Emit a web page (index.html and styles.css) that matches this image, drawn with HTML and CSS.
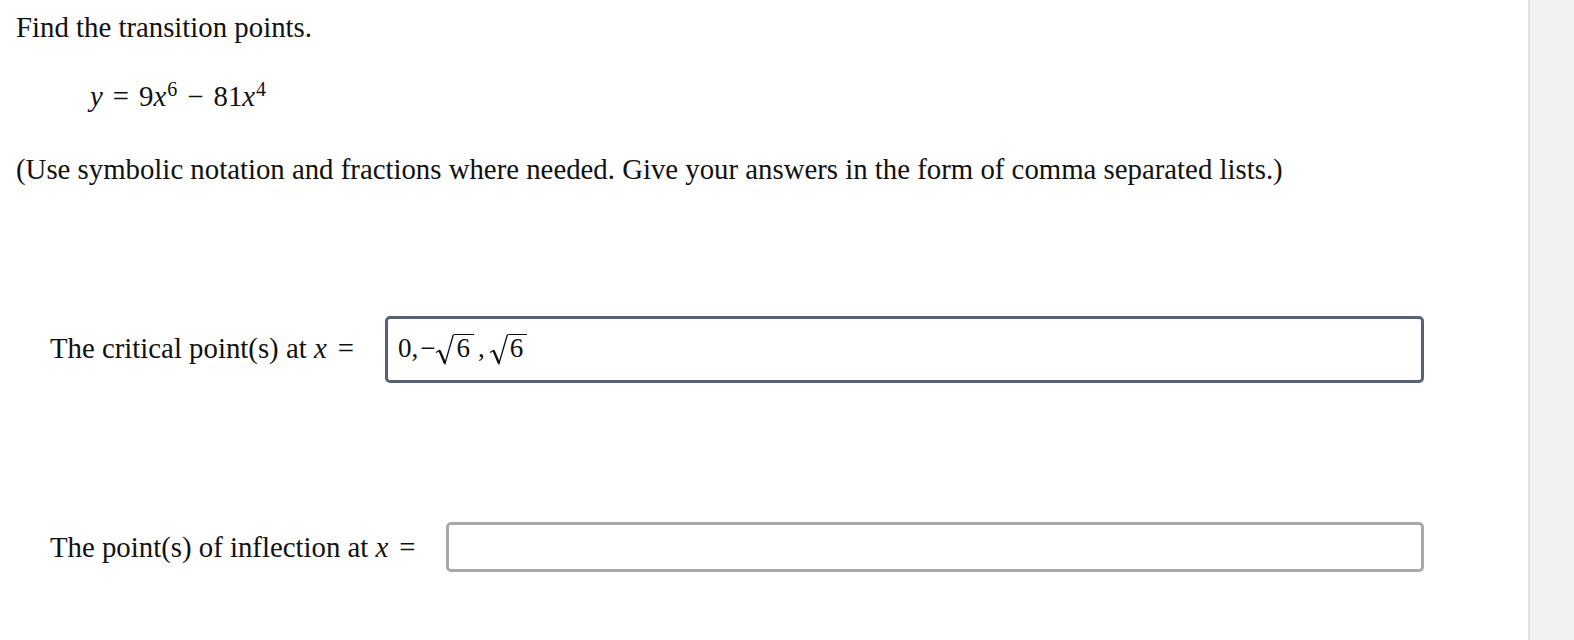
FILE: index.html
```html
<!DOCTYPE html>
<html>
<head>
<meta charset="utf-8">
<link rel="stylesheet" href="styles.css">
</head>
<body>
<div class="page">
  <main class="main">
    <p class="prompt">Find the transition points.</p>
    <div class="equation"><span class="mi">y</span><span class="mo">=</span><span class="mn">9</span><span class="mi">x</span><sup class="sup">6</sup><span class="mo">−</span><span class="mn">81</span><span class="mi">x</span><sup class="sup">4</sup></div>
    <p class="hint">(Use symbolic notation and fractions where needed. Give your answers in the form of comma separated lists.)</p>

    <div class="row row-critical">
      <span class="label">The critical point(s) at <span class="mi">x</span><span class="eq">=</span></span>
      <div class="answer answer-filled">
        <div class="val"><span>0,</span><span class="minus">−</span><span class="sqrt"><svg class="rad" width="19" height="31" viewBox="0 0 19 31"><path d="M1 18.5 L4.5 16.5 L10 29.5 L18.2 1.2 L19 1.2" fill="none" stroke="#111" stroke-width="1.3" stroke-linejoin="miter"/><path d="M4.6 16.6 L10 29.3" fill="none" stroke="#111" stroke-width="2.4"/></svg><span class="under">6</span></span><span class="comma">,</span><span class="sqrt"><svg class="rad" width="19" height="31" viewBox="0 0 19 31"><path d="M1 18.5 L4.5 16.5 L10 29.5 L18.2 1.2 L19 1.2" fill="none" stroke="#111" stroke-width="1.3" stroke-linejoin="miter"/><path d="M4.6 16.6 L10 29.3" fill="none" stroke="#111" stroke-width="2.4"/></svg><span class="under">6</span></span></div>
      </div>
    </div>

    <div class="row row-inflection">
      <span class="label">The point(s) of inflection at <span class="mi">x</span><span class="eq">=</span></span>
      <div class="answer answer-empty"></div>
    </div>
  </main>
  <aside class="side"></aside>
</div>
</body>
</html>
```

FILE: styles.css
```css
html, body {
  margin: 0;
  padding: 0;
  background: #ffffff;
}
.page {
  display: flex;
  min-height: 640px;
  font-family: "Liberation Serif", "Times New Roman", serif;
  color: #111111;
  font-size: 28.8px;
}
.main {
  flex: 1;
  padding: 10px 104px 0 16px;
  box-sizing: border-box;
}
.side {
  width: 44px;
  background: #f1f1f1;
  border-left: 2px solid #e2e2e2;
}
.prompt {
  margin: 0;
  line-height: 34px;
}
.equation {
  margin: 35px 0 0 74px;
  line-height: 34px;
  display: flex;
  align-items: baseline;
}
.mi {
  font-style: italic;
}
.mo {
  margin: 0 10px;
}
.sup {
  font-size: 20px;
  position: relative;
  top: -10px;
  line-height: 0;
  margin-left: 1px;
}
.hint {
  margin: 39px 0 0 0;
  line-height: 34px;
}
.row {
  display: flex;
  padding-left: 34px;
}
.row-critical {
  margin-top: 130px;
  align-items: flex-start;
}
.row-critical .label {
  margin-top: 15px;
  margin-right: 31px;
  line-height: 34px;
}
.label .eq {
  margin-left: 11px;
}
.answer {
  flex: 1;
  box-sizing: border-box;
  border-radius: 5px;
  background: #fff;
}
.answer-filled {
  height: 67px;
  border: 3px solid #566376;
  padding: 14px 0 0 10px;
}
.val {
  font-size: 27px;
  line-height: 30px;
}
.minus {
  margin-left: 2px;
}
.comma {
  margin: 0 4px 0 4px;
}
.sqrt {
  display: inline-flex;
  align-items: flex-start;
}
.rad {
  display: block;
  flex: none;
}
.under {
  align-self: baseline;
  border-top: 1.5px solid #111;
  padding: 0 4px 0 2px;
  line-height: 27px;
}
.row-inflection {
  margin-top: 139px;
  align-items: center;
}
.row-inflection .label {
  margin-right: 30px;
  line-height: 34px;
}
.answer-empty {
  height: 50px;
  border: 3px solid #a9a9a9;
}
```
